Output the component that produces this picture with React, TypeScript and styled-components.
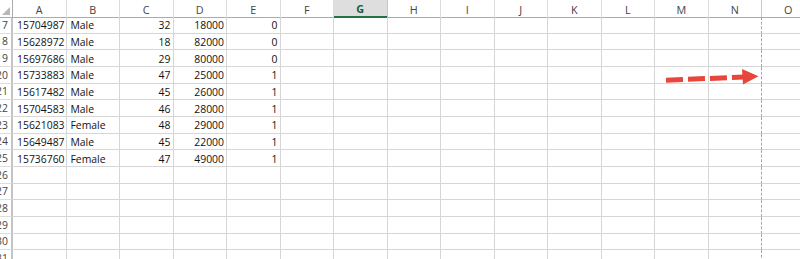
import React from 'react'
import styled, { createGlobalStyle, css } from 'styled-components'

const GlobalStyle = createGlobalStyle`
  html, body {
    margin: 0;
    padding: 0;
    background: #ffffff;
  }
  body {
    font-family: 'Open Sans', 'Liberation Sans', sans-serif;
  }
`

const COLS = ['A', 'B', 'C', 'D', 'E', 'F', 'G', 'H', 'I', 'J', 'K', 'L', 'M', 'N', 'O']
const ROW_H = 16.667
const GRID_TEMPLATE = `13px repeat(${COLS.length}, 53.5px)`

type Cell = { v: string; num?: boolean }

const DATA: Cell[][] = [
  ['15704987', 'Male', '32', '18000', '0'],
  ['15628972', 'Male', '18', '82000', '0'],
  ['15697686', 'Male', '29', '80000', '0'],
  ['15733883', 'Male', '47', '25000', '1'],
  ['15617482', 'Male', '45', '26000', '1'],
  ['15704583', 'Male', '46', '28000', '1'],
  ['15621083', 'Female', '48', '29000', '1'],
  ['15649487', 'Male', '45', '22000', '1'],
  ['15736760', 'Female', '47', '49000', '1'],
].map((r) => r.map((v, i) => ({ v, num: i >= 2 })))

const Sheet = styled.div`
  position: relative;
  width: 800px;
  height: 259px;
  overflow: hidden;
  background: #fff;
  font-size: 10.4px;
  color: #111;
`

const GridRow = styled.div<{ $h: number }>`
  display: grid;
  grid-template-columns: ${GRID_TEMPLATE};
  height: ${(p) => p.$h}px;
`

const Corner = styled.div`
  position: relative;
  box-sizing: border-box;
  border-right: 1px solid #ababab;
  border-bottom: 1px solid #ababab;
  background: #fff;

  &::after {
    content: '';
    position: absolute;
    right: 2px;
    bottom: 2px;
    width: 8px;
    height: 8px;
    background: #b8b8b8;
    clip-path: polygon(100% 0, 100% 100%, 0 100%);
  }
`

const ColHeader = styled.div<{ $selected?: boolean; $pageBreak?: boolean }>`
  box-sizing: border-box;
  display: flex;
  align-items: center;
  justify-content: center;
  color: #444;
  background: #fff;
  border-right: 1px solid #dcdcdc;
  border-bottom: 1px solid #ababab;
  padding-top: 1px;
  font-size: 10.8px;
  ${(p) =>
    p.$selected &&
    css`
      background: #dedede;
      color: #1d5a35;
      font-weight: 700;
      border-bottom: 2px solid #217346;
      border-right-color: #c6c6c6;
    `}
  ${(p) =>
    p.$pageBreak &&
    css`
      border-right-color: #c8c8c8;
    `}
`

const RowHeader = styled.div`
  box-sizing: border-box;
  display: flex;
  align-items: center;
  justify-content: flex-end;
  overflow: hidden;
  white-space: nowrap;
  padding-right: 3px;
  color: #444;
  border-right: 2px solid #c4c4c4;
  border-bottom: 1px solid #dedede;
`

const DataCell = styled.div<{ $num?: boolean; $pageBreak?: boolean }>`
  box-sizing: border-box;
  display: flex;
  align-items: center;
  justify-content: ${(p) => (p.$num ? 'flex-end' : 'flex-start')};
  padding: 1px ${(p) => (p.$num ? '2px' : '0')} 0 ${(p) => (p.$num ? '0' : '4px')};
  white-space: nowrap;
  border-right: 1px ${(p) => (p.$pageBreak ? 'dashed #a8a8a8' : 'solid #d6d6d6')};
  border-bottom: 1px solid #d6d6d6;
`

const ArrowLayer = styled.svg`
  position: absolute;
  left: 660px;
  top: 64px;
  width: 104px;
  height: 26px;
  pointer-events: none;
`

const PageArrow = () => (
  <ArrowLayer viewBox="0 0 104 26">
    <path
      d="M6 16.2 L84 13"
      stroke="#e8453c"
      strokeWidth={5}
      strokeDasharray="17 5"
      strokeLinecap="butt"
      fill="none"
    />
    <polygon points="82,5 98.5,12.3 83,20.5" fill="#e8453c" />
  </ArrowLayer>
)

export default function App() {
  const rows = Array.from({ length: 15 }, (_, i) => 17 + i)
  return (
    <>
      <GlobalStyle />
      <Sheet>
        <GridRow $h={17}>
          <Corner />
          {COLS.map((c) => (
            <ColHeader key={c} $selected={c === 'G'} $pageBreak={c === 'N'}>
              {c}
            </ColHeader>
          ))}
        </GridRow>
        {rows.map((n, ri) => {
          const data = DATA[ri] || []
          return (
            <GridRow key={n} $h={ROW_H}>
              <RowHeader>{n}</RowHeader>
              {COLS.map((c, ci) => {
                const cell = data[ci]
                return (
                  <DataCell key={c} $num={cell?.num} $pageBreak={c === 'N'}>
                    {cell?.v}
                  </DataCell>
                )
              })}
            </GridRow>
          )
        })}
        <PageArrow />
      </Sheet>
    </>
  )
}
